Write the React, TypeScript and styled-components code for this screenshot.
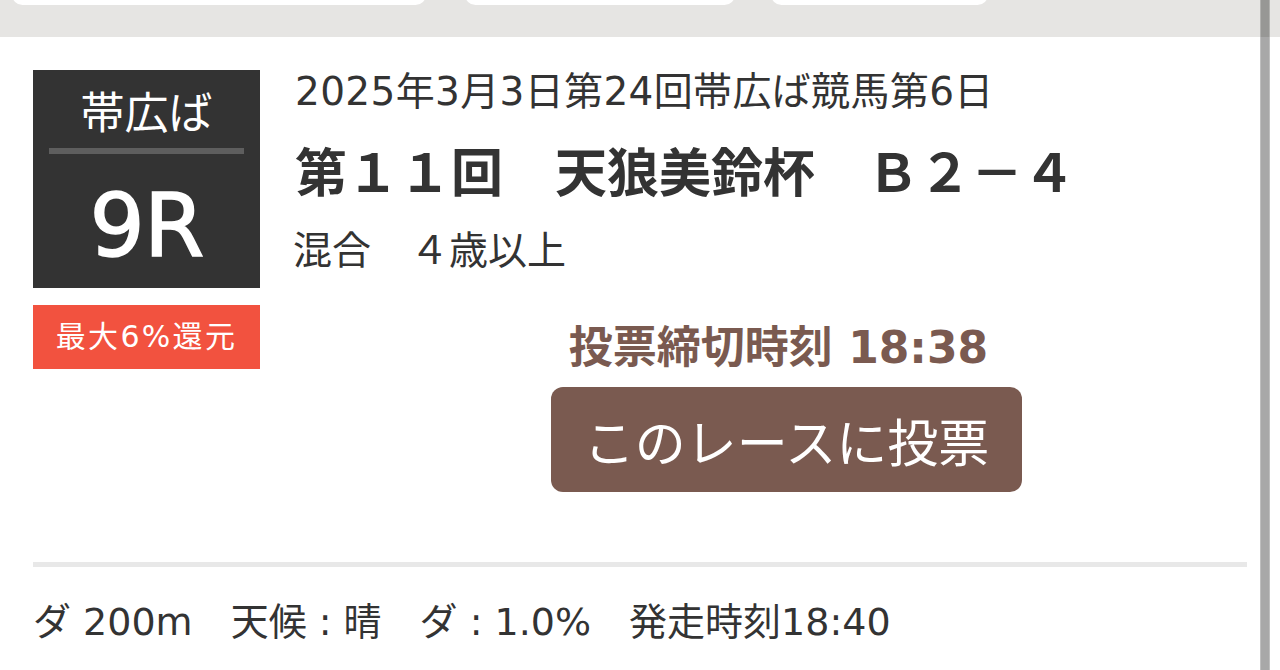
import React from 'react';
import styled, { createGlobalStyle } from 'styled-components';

const GlobalStyle = createGlobalStyle`
  html, body {
    margin: 0;
    padding: 0;
    background: #ffffff;
  }
  body {
    font-family: "DejaVu Sans", "Noto Sans CJK JP", sans-serif;
    color: #333333;
    overflow: hidden;
  }
`;

const Page = styled.div`
  position: relative;
  width: 1280px;
  height: 670px;
  overflow: hidden;
  background: #ffffff;
`;

const TabBand = styled.div`
  height: 37px;
  background: #e6e5e3;
  overflow: hidden;
`;

const TabRow = styled.div`
  display: flex;
  margin-top: -16px;
  padding-left: 12px;
`;

const Tab = styled.div<{ $w: number; $gap: number }>`
  width: ${(p) => p.$w}px;
  margin-right: ${(p) => p.$gap}px;
  height: 21px;
  background: #ffffff;
  border-radius: 12px;
`;

const Content = styled.div`
  padding: 33px 33px 0;
`;

const RaceRow = styled.div`
  display: flex;
  align-items: flex-start;
`;

const LeftCol = styled.div`
  width: 227px;
  flex: none;
  display: flex;
  flex-direction: column;
`;

const RaceBadge = styled.div`
  background: #333333;
  color: #ffffff;
  height: 218px;
  padding-top: 14px;
  box-sizing: border-box;
  display: flex;
  flex-direction: column;
  align-items: center;
`;

const Venue = styled.div`
  font-family: "Noto Sans CJK JP", sans-serif;
  font-size: 44px;
  line-height: 52px;
  font-weight: 400;
`;

const BadgeRule = styled.div`
  align-self: stretch;
  margin: 12px 16px 0;
  height: 6px;
  background: #5e5e5e;
`;

const RaceNo = styled.div`
  margin-top: 27px;
  font-family: "DejaVu Sans", sans-serif;
  font-size: 87px;
  line-height: 90px;
  letter-spacing: -1px;
  -webkit-text-stroke: 1.5px #ffffff;
`;

const RebateTag = styled.div`
  margin-top: 17px;
  height: 64px;
  background: #f2523f;
  color: #ffffff;
  display: flex;
  align-items: center;
  justify-content: center;
  font-size: 30px;
  letter-spacing: 2.3px;
  line-height: 1;
`;

const RightCol = styled.div`
  flex: 1;
  margin-left: 35px;
  display: flex;
  flex-direction: column;
`;

const DateLine = styled.div`
  font-size: 39px;
  line-height: 44px;
  letter-spacing: 0.35px;
  white-space: nowrap;
`;

const RaceTitle = styled.div`
  margin-top: 26px;
  font-family: "Noto Sans CJK JP", sans-serif;
  font-size: 52px;
  line-height: 60px;
  font-weight: 700;
  white-space: nowrap;
`;

const Conditions = styled.div`
  margin-top: 25px;
  margin-left: -2px;
  font-family: "Noto Sans CJK JP", sans-serif;
  font-size: 39px;
  line-height: 44px;
  white-space: nowrap;
`;

const Action = styled.div`
  margin-top: 54px;
  padding-left: 15px;
  display: flex;
  flex-direction: column;
  align-items: center;
`;

const Deadline = styled.div`
  color: #7a5a50;
  font-size: 44px;
  line-height: 50px;
  font-weight: 700;
  white-space: nowrap;
`;

const VoteButton = styled.button`
  margin-top: 14px;
  margin-left: 16px;
  width: 471px;
  height: 105px;
  border: none;
  border-radius: 12px;
  background: #7a5a50;
  color: #ffffff;
  font-family: "Noto Sans CJK JP", sans-serif;
  font-size: 51px;
  font-weight: 400;
  padding: 0;
  cursor: pointer;
`;

const Separator = styled.div`
  margin-top: 70px;
  height: 5px;
  background: #e8e8e8;
`;

const InfoLine = styled.div`
  margin-top: 33px;
  font-size: 38px;
  line-height: 44px;
  white-space: nowrap;
`;

const ScrollBar = styled.div`
  position: absolute;
  top: 0;
  bottom: 0;
  left: 1260px;
  width: 10px;
  background: rgba(0, 0, 0, 0.34);
  box-shadow: inset 1px 0 0 rgba(255, 255, 255, 0.25), inset -1px 0 0 rgba(255, 255, 255, 0.25);
`;

const tabs = [
  { w: 414, gap: 39 },
  { w: 270, gap: 36 },
  { w: 217, gap: 0 },
];

export default function App() {
  return (
    <Page>
      <GlobalStyle />
      <TabBand>
        <TabRow>
          {tabs.map((t, i) => (
            <Tab key={i} $w={t.w} $gap={t.gap} />
          ))}
        </TabRow>
      </TabBand>
      <Content>
        <RaceRow>
          <LeftCol>
            <RaceBadge>
              <Venue>帯広ば</Venue>
              <BadgeRule />
              <RaceNo>9R</RaceNo>
            </RaceBadge>
            <RebateTag>最大6%還元</RebateTag>
          </LeftCol>
          <RightCol>
            <DateLine>2025年3月3日第24回帯広ば競馬第6日</DateLine>
            <RaceTitle>第１１回　天狼美鈴杯　Ｂ２－４</RaceTitle>
            <Conditions>混合　４歳以上</Conditions>
            <Action>
              <Deadline>投票締切時刻 18:38</Deadline>
              <VoteButton>このレースに投票</VoteButton>
            </Action>
          </RightCol>
        </RaceRow>
        <Separator />
        <InfoLine>ダ 200m　天候 : 晴　ダ : 1.0%　発走時刻18:40</InfoLine>
      </Content>
      <ScrollBar />
    </Page>
  );
}
